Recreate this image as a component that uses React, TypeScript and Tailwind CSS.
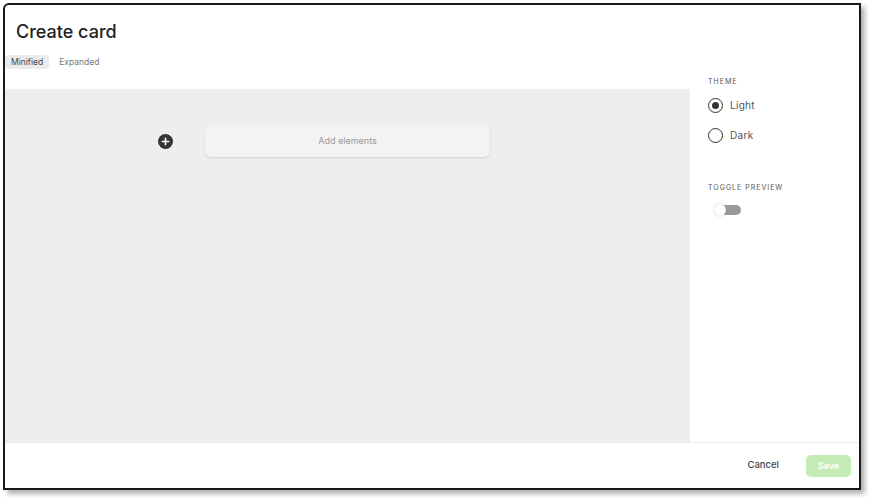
import React, { useState } from "react";

function Radio({ label, checked, onClick }: { label: string; checked: boolean; onClick: () => void }) {
  return (
    <button onClick={onClick} className="flex items-center gap-[7px] h-[16px]">
      <span className="w-[15px] h-[15px] rounded-full border-[1.5px] border-[#333] flex items-center justify-center">
        {checked && <span className="w-[7px] h-[7px] rounded-full bg-[#333]" />}
      </span>
      <span className="text-[10px] text-[#555] tracking-[0.3px]">{label}</span>
    </button>
  );
}

export default function App() {
  const [tab, setTab] = useState<"min" | "exp">("min");
  const [theme, setTheme] = useState<"light" | "dark">("light");
  const [preview, setPreview] = useState(false);

  return (
    <div className="w-[869px] h-[498px] bg-white pt-[3px] pl-[3px]" style={{ fontFamily: "Inter, 'Noto Sans', sans-serif" }}>
      <div className="w-[858px] h-[487px] border-2 border-[#1a1a1a] rounded-tl-[6px] bg-white shadow-[4px_4px_5px_rgba(0,0,0,0.3)] flex flex-col">
        <div className="flex flex-1 min-h-0">
          {/* left column */}
          <div className="w-[685px] flex flex-col">
            <div className="h-[84px] flex flex-col">
              <h1 className="pl-[11px] pt-[15px] text-[18px] leading-[24px] font-medium text-[#222]">Create card</h1>
              <div className="mt-[11px] flex items-center gap-[4px]">
                <button
                  onClick={() => setTab("min")}
                  className={`h-[14px] px-[6px] rounded-[4px] text-[8.5px] ${tab === "min" ? "bg-[#ebebeb] text-[#444]" : "text-[#777]"}`}
                >
                  Minified
                </button>
                <button
                  onClick={() => setTab("exp")}
                  className={`h-[14px] px-[6px] rounded-[4px] text-[8.5px] ${tab === "exp" ? "bg-[#ebebeb] text-[#444]" : "text-[#777]"}`}
                >
                  Expanded
                </button>
              </div>
            </div>
            <div className="flex-1 bg-[#eeeeee] pt-[36px] pl-[153px] flex items-start">
              <button className="mt-[9px] w-[15px] h-[15px] rounded-full bg-[#333] flex items-center justify-center">
                <svg width="9" height="9" viewBox="0 0 10 10">
                  <path d="M5 1.5v7M1.5 5h7" stroke="white" strokeWidth="1.8" strokeLinecap="round" />
                </svg>
              </button>
              <div className="ml-[32px] w-[285px] h-[32px] rounded-[6px] bg-[#f3f3f3] shadow-[0_1px_2px_rgba(0,0,0,0.12)] flex items-center justify-center text-[9px] text-[#999]">
                Add elements
              </div>
            </div>
          </div>
          {/* right column */}
          <div className="flex-1 pl-[18px] pt-[72px] flex flex-col">
            <div className="text-[7px] tracking-[1px] text-[#555] leading-[10px]">THEME</div>
            <div className="mt-[10px] flex flex-col gap-[14px]">
              <Radio label="Light" checked={theme === "light"} onClick={() => setTheme("light")} />
              <Radio label="Dark" checked={theme === "dark"} onClick={() => setTheme("dark")} />
            </div>
            <div className="mt-[40px] text-[7px] tracking-[1px] text-[#555] leading-[10px]">TOGGLE PREVIEW</div>
            <button onClick={() => setPreview(!preview)} className="mt-[11px] ml-[6px] relative w-[27px] h-[12px]">
              <span className={`absolute right-0 top-[1px] w-[22px] h-[10px] rounded-full ${preview ? "bg-[#7cc75a]" : "bg-[#9a9a9a]"}`} />
              <span className={`absolute top-0 w-[12px] h-[12px] rounded-full bg-white shadow-[0_0_2px_rgba(0,0,0,0.25)] ${preview ? "left-[15px]" : "left-0"}`} />
            </button>
          </div>
        </div>
        <div className="h-[46px] border-t border-[#ececec] flex items-center justify-end pr-[8px] gap-[27px]">
          <button className="text-[9.5px] font-medium text-[#444]">Cancel</button>
          <button className="w-[45px] h-[22px] rounded-[5px] bg-[#c6ecb5] text-white text-[9px] font-semibold">Save</button>
        </div>
      </div>
    </div>
  );
}
